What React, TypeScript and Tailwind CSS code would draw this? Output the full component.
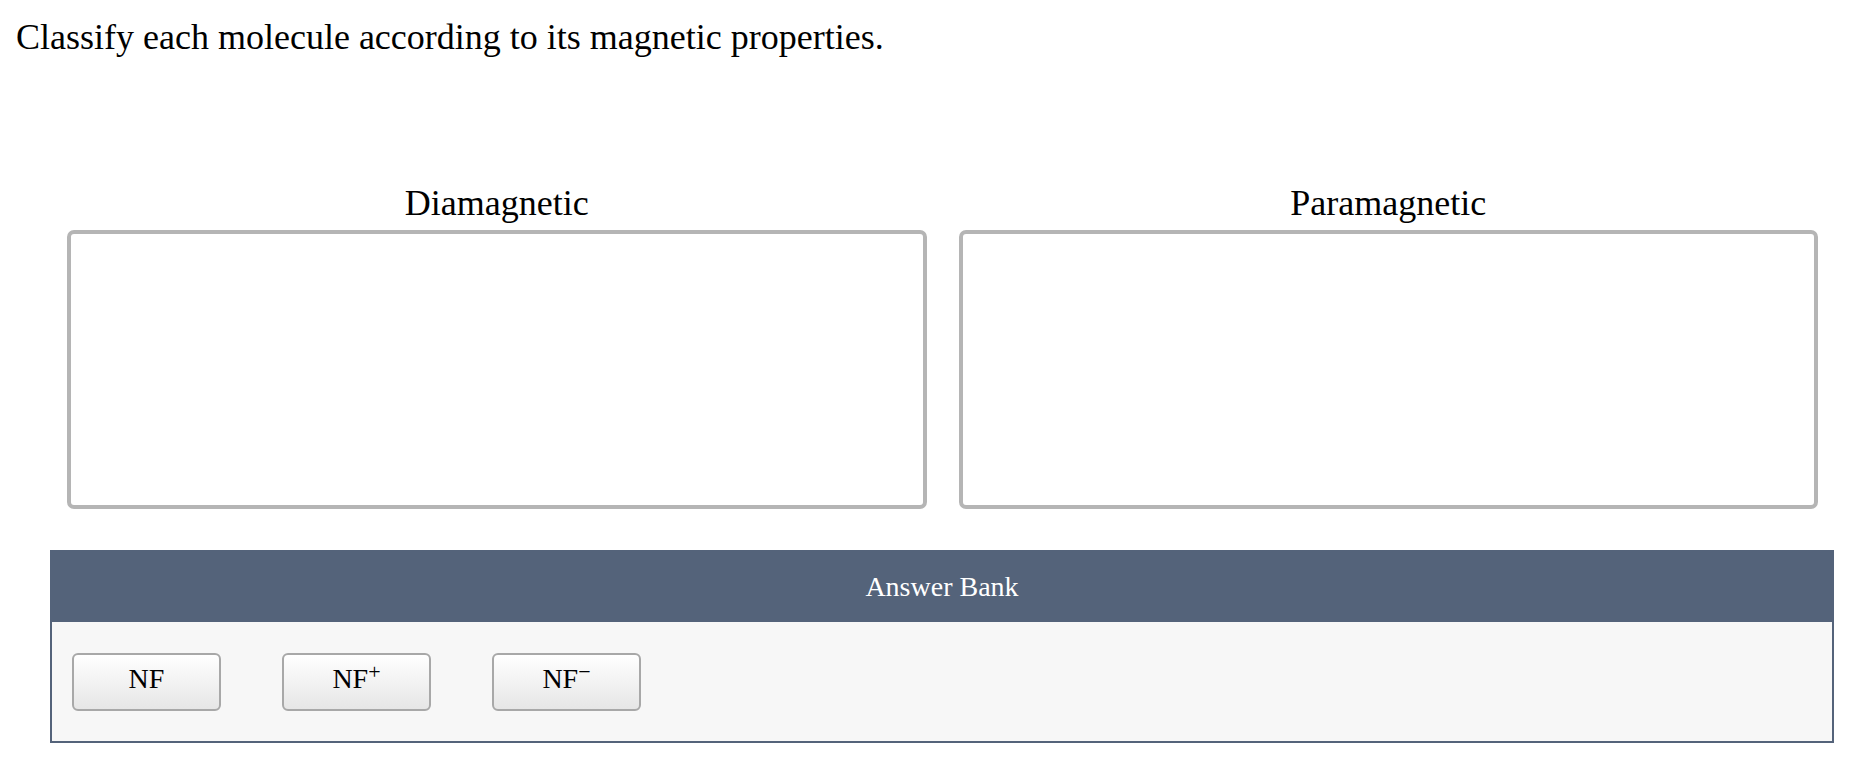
import React from "react";

const serif = { fontFamily: '"Liberation Serif", "Times New Roman", serif' };

function DropBox({ title }: { title: string }) {
  return (
    <div className="flex flex-col">
      <div className="text-center text-[36px] leading-[36px] text-black">{title}</div>
      <div className="mt-[9px] h-[279px] rounded-[7px] border-[4px] border-[#b5b5b5] bg-white" />
    </div>
  );
}

function Chip({ children }: { children: React.ReactNode }) {
  return (
    <div className="flex h-[58px] w-[149px] items-center justify-center rounded-[6px] border-[2px] border-[#a8a8a8] bg-gradient-to-b from-white to-[#e6e6e6] text-[28px] leading-none text-black">
      <span className="-mt-[6px]">{children}</span>
    </div>
  );
}

function Sup({ children }: { children: React.ReactNode }) {
  return <span className="relative -top-[9px] text-[22px] leading-none">{children}</span>;
}

export default function App() {
  return (
    <div className="min-h-[776px] w-[1852px] bg-white text-black" style={serif}>
      <p className="pl-[16px] pt-[19px] text-[36px] leading-[36px]">
        Classify each molecule according to its magnetic properties.
      </p>
      <div className="ml-[50px] mt-[130px] w-[1784px]">
        <div className="grid grid-cols-2 gap-[32px] pl-[17px] pr-[16px]">
          <DropBox title="Diamagnetic" />
          <DropBox title="Paramagnetic" />
        </div>
        <div className="mt-[41px] border-[2px] border-[#54637a]">
          <div className="flex h-[70px] items-center justify-center bg-[#54637a] text-[28px] text-white">
            Answer Bank
          </div>
          <div className="flex gap-[61px] bg-[#f7f7f7] pb-[30px] pl-[20px] pt-[31px]">
            <Chip>NF</Chip>
            <Chip>
              NF<Sup>+</Sup>
            </Chip>
            <Chip>
              NF<Sup>−</Sup>
            </Chip>
          </div>
        </div>
      </div>
    </div>
  );
}
